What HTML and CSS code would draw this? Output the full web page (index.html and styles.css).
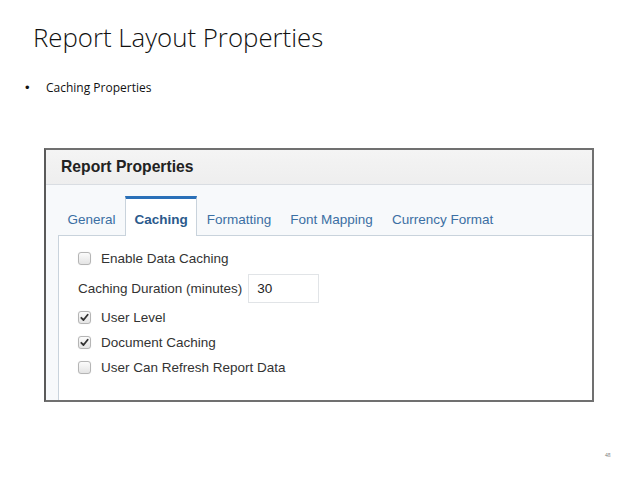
FILE: index.html
```html
<!DOCTYPE html>
<html>
<head>
<meta charset="utf-8">
<link rel="stylesheet" href="styles.css">
</head>
<body>
<div class="slide">
  <h1 class="title">Report Layout Properties</h1>
  <ul class="bullets">
    <li><span class="dot">•</span><span>Caching Properties</span></li>
  </ul>
  <div class="dialog">
    <div class="dlg-header">Report Properties</div>
    <div class="dlg-body">
      <div class="tabs">
        <span class="tab">General</span>
        <span class="tab active">Caching</span>
        <span class="tab">Formatting</span>
        <span class="tab">Font Mapping</span>
        <span class="tab">Currency Format</span>
      </div>
      <div class="panel">
        <div class="row r1"><span class="cb"></span><span>Enable Data Caching</span></div>
        <div class="row dur"><span>Caching Duration (minutes)</span><span class="input">30</span></div>
        <div class="row"><span class="cb"><svg viewBox="0 0 13 13" width="13" height="13"><path d="M3.3 6.8 L5.5 9 L9.7 3.8" fill="none" stroke="#333" stroke-width="1.8" stroke-linecap="round" stroke-linejoin="round"/></svg></span><span>User Level</span></div>
        <div class="row"><span class="cb"><svg viewBox="0 0 13 13" width="13" height="13"><path d="M3.3 6.8 L5.5 9 L9.7 3.8" fill="none" stroke="#333" stroke-width="1.8" stroke-linecap="round" stroke-linejoin="round"/></svg></span><span>Document Caching</span></div>
        <div class="row"><span class="cb"></span><span>User Can Refresh Report Data</span></div>
      </div>
    </div>
  </div>
  <div class="pagenum">48</div>
</div>
</body>
</html>
```

FILE: styles.css
```css
html, body {
  margin: 0;
  padding: 0;
  background: #ffffff;
}
.slide {
  width: 638px;
  height: 478px;
  position: relative;
  overflow: hidden;
  font-family: "Open Sans", "Liberation Sans", sans-serif;
}
.title {
  margin: 0;
  padding: 20px 0 0 33px;
  font-family: "Open Sans", sans-serif;
  font-weight: 300;
  font-size: 25.8px;
  line-height: 34px;
  color: #111;
}
.bullets {
  list-style: none;
  margin: 0;
  padding: 25px 0 0 25px;
}
.bullets li {
  display: flex;
  font-size: 12px;
  line-height: 18px;
  color: #111;
}
.dot {
  width: 21px;
  font-family: "Liberation Sans", Arial, sans-serif;
  font-size: 13px;
}
.dialog {
  margin: 51px 0 0 44px;
  width: 546px;
  height: 250px;
  border: 2px solid #707070;
  border-left-color: #5a5a5a;
  display: flex;
  flex-direction: column;
  font-family: "Liberation Sans", Arial, sans-serif;
}
.dlg-header {
  height: 34px;
  background: linear-gradient(#f4f4f4, #eeeeee);
  border-bottom: 1px solid #d9dde2;
  padding-left: 15px;
  font-weight: bold;
  font-size: 15.7px;
  line-height: 33px;
  color: #222;
}
.dlg-body {
  flex: 1;
  background: #f7f9fb;
  padding: 11px 0 0 12px;
  display: flex;
  flex-direction: column;
}
.tabs {
  display: flex;
  height: 39px;
  align-items: stretch;
}
.tab {
  padding: 0 8.5px;
  font-size: 13.5px;
  line-height: 45px;
  color: #3b6fa3;
  border: 1px solid transparent;
  border-bottom: none;
  box-sizing: border-box;
}
.tab.active {
  background: #ffffff;
  border-color: #c9d3dc;
  border-top: 3px solid #2a70b8;
  line-height: 41px;
  font-weight: bold;
  color: #2b5a8c;
  margin-bottom: -1px;
  position: relative;
  z-index: 1;
}
.panel {
  flex: 1;
  background: #ffffff;
  border-top: 1px solid #c9d3dc;
  border-left: 1px solid #c9d3dc;
  padding: 15px 0 0 19px;
  font-size: 13.5px;
  color: #333;
}
.row {
  display: flex;
  align-items: center;
  height: 15px;
  margin-bottom: 10px;
}
.row.r1 {
  margin-bottom: 8px;
}
.row.dur {
  height: 29px;
  margin-bottom: 7px;
}
.cb {
  width: 11px;
  height: 11px;
  border: 1px solid #b5b5b5;
  border-radius: 3px;
  background: linear-gradient(#fbfbfb, #e4e4e4);
  margin-right: 10px;
  display: flex;
  align-items: center;
  justify-content: center;
  box-shadow: 0 0 1px #ddd;
}
.cb svg {
  display: block;
  flex: none;
}
.input {
  margin-left: 6px;
  width: 61px;
  height: 27px;
  border: 1px solid #e1e4e7;
  padding-left: 8px;
  line-height: 27px;
  color: #222;
}
.pagenum {
  position: absolute;
  left: 605px;
  top: 452px;
  font-size: 5px;
  color: #777;
}
```
